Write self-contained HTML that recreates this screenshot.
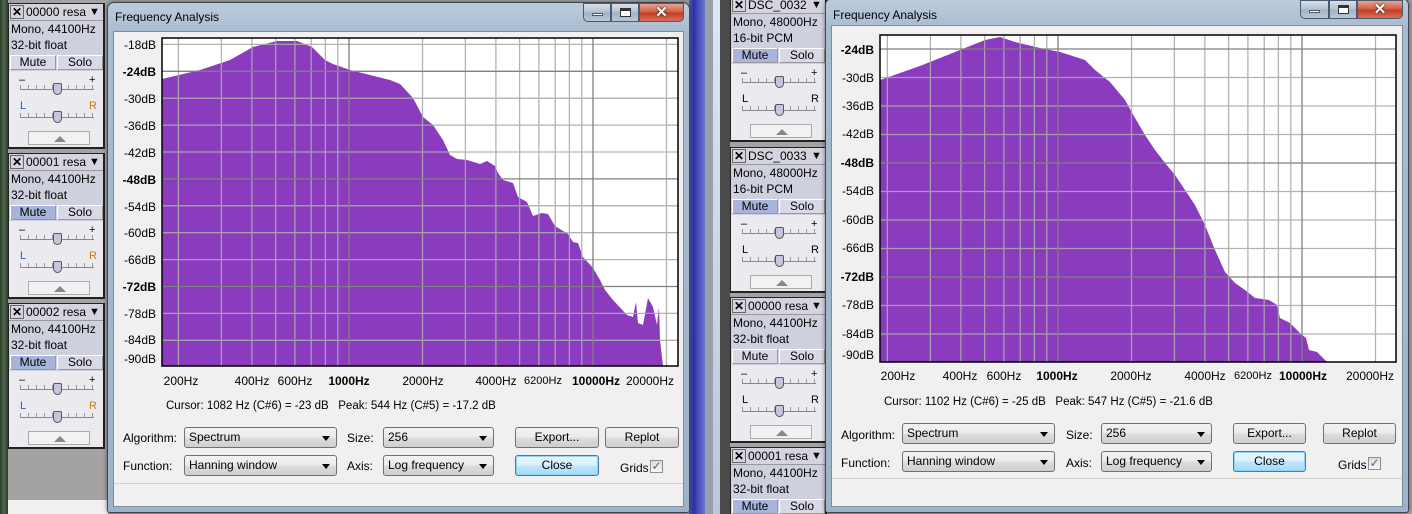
<!DOCTYPE html>
<html style="width:1412px;height:514px;overflow:hidden"><head><meta charset="utf-8"><style>
*{box-sizing:border-box;margin:0;padding:0}
body{width:1412px;height:514px;position:relative;overflow:hidden;background:#a3a3a3;font-family:"Liberation Sans",sans-serif;font-size:12px;color:#000}
.abs{position:absolute}
.trk{position:absolute;width:97px;height:146px;background:#e6e6ec;border:1px solid #222;border-right:2px solid #222;border-bottom:2px solid #222;overflow:hidden}
.hd{position:absolute;left:0;top:0;width:100%;height:17px;background:#d4d4de;border-bottom:1px solid #999}
.hd .x{position:absolute;left:1px;top:1px;width:14px;height:14px;border:1px solid #666;font-size:12px;line-height:13px;text-align:center;font-weight:bold}
.hd .nm{position:absolute;left:17px;top:1px;height:14px;width:66px;font-size:12px;line-height:14px;white-space:nowrap;overflow:hidden}
.hd .dd{position:absolute;left:80px;top:0;font-size:11px;line-height:16px}
.info{position:absolute;left:0;top:17px;width:100%;height:34px;background:#cfd0de;font-size:12px;line-height:16px;padding-left:2px;white-space:nowrap}
.ms{position:absolute;left:0;top:51px;width:100%;height:16px;background:#cfd0de}
.ms span{position:absolute;top:0;height:15px;border:1px solid #fff;border-right-color:#999;border-bottom-color:#999;background:#d8d9e4;font-size:12px;line-height:13px;text-align:center}
.ms .m{left:1px;width:46px}.ms .s{left:48px;width:46px}
.ms .on{background:#a9b4dc}
.sl{position:absolute;left:0;top:67px;width:100%;height:78px;background:#ebebef}
.ln{position:absolute;left:11px;width:74px;height:5px;border-bottom:1px solid #888;background:repeating-linear-gradient(90deg,#999 0 1px,transparent 1px 8px)}
.th{position:absolute;left:44px;width:9px;height:12px;background:#c4c6dc;border:1px solid #555;border-radius:2px 2px 5px 5px}
.lab{position:absolute;font-size:11px}
.up{position:absolute;left:19px;top:60px;width:62px;height:14px;border:1px solid #aaa;background:#f2f2f2}
.up i{position:absolute;left:25px;top:4px;width:0;height:0;border-left:6px solid transparent;border-right:6px solid transparent;border-bottom:6px solid #888}
.dlg{position:absolute;border:1px solid #3c4654;border-radius:7px 7px 3px 3px;background:linear-gradient(180deg,#bcccdc 0,#a9bbcf 30px,#9fb3c8 100%);box-shadow:0 0 4px rgba(0,0,0,.5)}
.ttl{position:absolute;left:7px;top:7px;font-size:12px;color:#000}
.client{position:absolute;background:#f0f0f0;border:1px solid #7d8c9c}
.tb{position:absolute;height:19px;border:1px solid #4a5a6c;background:linear-gradient(#d8e0ea,#b1c0d0 50%,#a0b2c6 51%,#b8c8d8)}
.tb.c{background:linear-gradient(#e9a496,#d0583f 50%,#c13b20 51%,#d7705c);border-radius:0 0 5px 0}
.tb.mn{border-radius:0 0 0 5px}
.sel{position:absolute;height:21px;border:1px solid #707070;border-radius:3px;background:linear-gradient(#f2f2f2,#ebebeb 50%,#dddddd 51%,#cfcfcf);font-size:12px;line-height:19px;padding-left:4px}
.sel:after{content:"";position:absolute;right:6px;top:8px;border-left:4px solid transparent;border-right:4px solid transparent;border-top:5px solid #000}
.btn{position:absolute;height:21px;border:1px solid #707070;border-radius:3px;background:linear-gradient(#f2f2f2,#ebebeb 50%,#dddddd 51%,#cfcfcf);font-size:12px;line-height:19px;text-align:center}
.btn.def{border-color:#3c7fb1;background:linear-gradient(#eaf6fd,#d9f0fc 50%,#bee6fd 51%,#a7d9f5);box-shadow:inset 0 0 0 1px #8fd4f8}
.cb{position:absolute;width:13px;height:13px;border:1px solid #8f8f8f;background:linear-gradient(#dcdcdc,#f8f8f8);font-size:12px;line-height:11px;text-align:center;color:#4a5fa8}
.lbl{position:absolute;font-size:12px}
.stat{position:absolute;height:22px;border-top:1px solid #d6d3ce;background:#f0f0f0}
</style></head><body>

<div class="abs" style="left:0;top:0;width:8px;height:514px;background:linear-gradient(90deg,#2c3a2c,#4e6a4a,#2e3b2d)"></div>
<div class="abs" style="left:8px;top:0;width:100px;height:500px;background:#a3a3a3"></div>
<div class="abs" style="left:8px;top:500px;width:100px;height:14px;background:#f0f0f0"></div>

<div class="trk" style="left:8px;top:3px">
 <div class="hd"><span class="x">✕</span><span class="nm">00000 resa</span><span class="dd">▼</span></div>
 <div class="info">Mono, 44100Hz<br>32-bit float</div>
 <div class="ms"><span class="m">Mute</span><span class="s">Solo</span></div>
 <div class="sl"><span class="lab" style="left:10px;top:3px">–</span><span class="lab" style="left:80px;top:3px">+</span><div class="ln" style="top:14px"></div><div class="th" style="top:12px"></div>
 <span class="lab" style="left:11px;top:29px;color:#2a5fc0">L</span><span class="lab" style="left:80px;top:29px;color:#c08010">R</span><div class="ln" style="top:42px"></div><div class="th" style="top:40px"></div><div class="up"><i></i></div></div>
</div>
<div class="trk" style="left:8px;top:153px">
 <div class="hd"><span class="x">✕</span><span class="nm">00001 resa</span><span class="dd">▼</span></div>
 <div class="info">Mono, 44100Hz<br>32-bit float</div>
 <div class="ms"><span class="m on">Mute</span><span class="s">Solo</span></div>
 <div class="sl"><span class="lab" style="left:10px;top:3px">–</span><span class="lab" style="left:80px;top:3px">+</span><div class="ln" style="top:14px"></div><div class="th" style="top:12px"></div>
 <span class="lab" style="left:11px;top:29px;color:#2a5fc0">L</span><span class="lab" style="left:80px;top:29px;color:#c08010">R</span><div class="ln" style="top:42px"></div><div class="th" style="top:40px"></div><div class="up"><i></i></div></div>
</div>
<div class="trk" style="left:8px;top:303px">
 <div class="hd"><span class="x">✕</span><span class="nm">00002 resa</span><span class="dd">▼</span></div>
 <div class="info">Mono, 44100Hz<br>32-bit float</div>
 <div class="ms"><span class="m on">Mute</span><span class="s">Solo</span></div>
 <div class="sl"><span class="lab" style="left:10px;top:3px">–</span><span class="lab" style="left:80px;top:3px">+</span><div class="ln" style="top:14px"></div><div class="th" style="top:12px"></div>
 <span class="lab" style="left:11px;top:29px;color:#2a5fc0">L</span><span class="lab" style="left:80px;top:29px;color:#c08010">R</span><div class="ln" style="top:42px"></div><div class="th" style="top:40px"></div><div class="up"><i></i></div></div>
</div>

<div class="abs" style="left:689px;top:0;width:16px;height:514px;background:linear-gradient(90deg,#5a6ab0,#2d2fa8 30%,#4a50c0 60%,#6878c8)"></div>
<div class="abs" style="left:705px;top:0;width:8px;height:514px;background:#9aa0aa"></div>
<div class="abs" style="left:713px;top:0;width:7px;height:514px;background:linear-gradient(#dde6f2,#b8c8da)"></div>
<div class="abs" style="left:720px;top:0;width:10px;height:514px;background:#4a4a4a"></div>
<div class="abs" style="left:730px;top:0;width:96px;height:514px;background:#a3a3a3"></div>

<div class="trk" style="left:730px;top:-4px">
 <div class="hd"><span class="x">✕</span><span class="nm">DSC_0032</span><span class="dd">▼</span></div>
 <div class="info">Mono, 48000Hz<br>16-bit PCM</div>
 <div class="ms"><span class="m on">Mute</span><span class="s">Solo</span></div>
 <div class="sl"><span class="lab" style="left:10px;top:3px">–</span><span class="lab" style="left:80px;top:3px">+</span><div class="ln" style="top:14px"></div><div class="th" style="top:12px"></div>
 <span class="lab" style="left:11px;top:29px">L</span><span class="lab" style="left:80px;top:29px">R</span><div class="ln" style="top:42px"></div><div class="th" style="top:40px"></div><div class="up"><i></i></div></div>
</div>
<div class="trk" style="left:730px;top:147px">
 <div class="hd"><span class="x">✕</span><span class="nm">DSC_0033</span><span class="dd">▼</span></div>
 <div class="info">Mono, 48000Hz<br>16-bit PCM</div>
 <div class="ms"><span class="m on">Mute</span><span class="s">Solo</span></div>
 <div class="sl"><span class="lab" style="left:10px;top:3px">–</span><span class="lab" style="left:80px;top:3px">+</span><div class="ln" style="top:14px"></div><div class="th" style="top:12px"></div>
 <span class="lab" style="left:11px;top:29px">L</span><span class="lab" style="left:80px;top:29px">R</span><div class="ln" style="top:42px"></div><div class="th" style="top:40px"></div><div class="up"><i></i></div></div>
</div>
<div class="trk" style="left:730px;top:297px">
 <div class="hd"><span class="x">✕</span><span class="nm">00000 resa</span><span class="dd">▼</span></div>
 <div class="info">Mono, 44100Hz<br>32-bit float</div>
 <div class="ms"><span class="m">Mute</span><span class="s">Solo</span></div>
 <div class="sl"><span class="lab" style="left:10px;top:3px">–</span><span class="lab" style="left:80px;top:3px">+</span><div class="ln" style="top:14px"></div><div class="th" style="top:12px"></div>
 <span class="lab" style="left:11px;top:29px">L</span><span class="lab" style="left:80px;top:29px">R</span><div class="ln" style="top:42px"></div><div class="th" style="top:40px"></div><div class="up"><i></i></div></div>
</div>
<div class="trk" style="left:730px;top:447px;height:80px">
 <div class="hd"><span class="x">✕</span><span class="nm">00001 resa</span><span class="dd">▼</span></div>
 <div class="info">Mono, 44100Hz<br>32-bit float</div>
 <div class="ms"><span class="m on">Mute</span><span class="s">Solo</span></div>
</div>

<div class="dlg" style="left:107px;top:2px;width:583px;height:511px">
 <div class="ttl">Frequency Analysis</div>
 <div class="tb mn" style="left:475px;top:0;width:28px"><div class="abs" style="left:8px;top:9px;width:11px;height:3px;background:#fff;border:1px solid #556"></div></div>
 <div class="tb" style="left:503px;top:0;width:28px"><div class="abs" style="left:8px;top:4px;width:11px;height:9px;border:1px solid #333;border-top-width:3px;background:#fff"></div></div>
 <div class="tb c" style="left:531px;top:0;width:45px;color:#fff;font-weight:bold;font-size:15px;text-align:center;line-height:17px;text-shadow:0 0 2px #000">✕</div>
 <div class="client" style="left:5px;top:28px;width:571px;height:476px"></div>
 <div class="stat" style="left:6px;top:480px;width:569px"></div>
</div>

<div class="dlg" style="left:825px;top:-2px;width:584px;height:515px">
 <div class="ttl" style="top:9px">Frequency Analysis</div>
 <div class="tb mn" style="left:474px;top:1px;width:29px"><div class="abs" style="left:8px;top:9px;width:11px;height:3px;background:#fff;border:1px solid #556"></div></div>
 <div class="tb" style="left:503px;top:1px;width:28px"><div class="abs" style="left:8px;top:4px;width:11px;height:9px;border:1px solid #333;border-top-width:3px;background:#fff"></div></div>
 <div class="tb c" style="left:531px;top:1px;width:46px;color:#fff;font-weight:bold;font-size:15px;text-align:center;line-height:17px;text-shadow:0 0 2px #000">✕</div>
 <div class="client" style="left:5px;top:26px;width:572px;height:482px"></div>
 <div class="stat" style="left:6px;top:479px;width:570px"></div>
</div>

<svg class="abs" style="left:0;top:0" width="1412" height="514" font-family="Liberation Sans, sans-serif" font-size="12">
 <rect x="162" y="38" width="516" height="328" fill="#fff"/>
 <polygon fill="#8a3bbe" points="162,366 162,79 200,70 230,60 253,47 277,41 297,41 312,47 325,60 333,64 350,70 370,75 390,80 400,84 413,98 423,117 433,125 443,140 450,155 457,159 467,160 480,164 487,161 495,166 498,173 503,180 513,183 518,197 527,202 533,216 542,213 548,214 555,226 568,234 573,242 578,243 583,257 593,268 600,280 605,290 613,300 627,315 633,317 636,302 638,323 643,325 648,298 653,307 657,325 659,307 660,340 663,366"/>
 <g stroke="#aaa" stroke-width="1.3" opacity=".9">
  <path d="M178.4 38V366M221.4 38V366M251.9 38V366M275.6 38V366M294.9 38V366M311.2 38V366M325.4 38V366M337.8 38V366M422.5 38V366M465.4 38V366M495.9 38V366M519.6 38V366M538.9 38V366M555.2 38V366M569.4 38V366M581.8 38V366M666.5 38V366"/>
  <path d="M162 44.4H678M162 98.2H678M162 125.1H678M162 152H678M162 205.8H678M162 232.7H678M162 259.6H678M162 313.4H678M162 340.3H678"/>
 </g>
 <g stroke="#808080" stroke-width="1.3">
  <path d="M349 38V366M593 38V366M162 71.3H678M162 178.9H678M162 286.5H678"/>
 </g>
 <rect x="162" y="38" width="516" height="328" fill="none" stroke="#000" stroke-width="1.5"/>
 <g text-anchor="end">
  <text x="156" y="49">-18dB</text><text x="156" y="76" font-weight="bold">-24dB</text><text x="156" y="103">-30dB</text><text x="156" y="130">-36dB</text><text x="156" y="157">-42dB</text><text x="156" y="184" font-weight="bold">-48dB</text><text x="156" y="211">-54dB</text><text x="156" y="237">-60dB</text><text x="156" y="264">-66dB</text><text x="156" y="291" font-weight="bold">-72dB</text><text x="156" y="318">-78dB</text><text x="156" y="344">-84dB</text><text x="156" y="363">-90dB</text>
 </g>
 <g text-anchor="middle">
  <text x="181" y="385">200Hz</text><text x="252" y="385">400Hz</text><text x="295" y="385">600Hz</text><text x="349" y="385" font-weight="bold">1000Hz</text><text x="423" y="385">2000Hz</text><text x="496" y="385">4000Hz</text><text x="543" y="384" font-size="11">6200Hz</text><text x="596" y="385" font-weight="bold">10000Hz</text><text x="650" y="385">20000Hz</text>
 </g>
 <text x="166" y="409" font-size="11.5">Cursor: 1082 Hz (C#6) = -23 dB &#160;&#160;Peak: 544 Hz (C#5) = -17.2 dB</text>

 <rect x="880" y="35" width="516" height="327" fill="#fff"/>
 <polygon fill="#8a3bbe" points="880,362 880,80 920,66 960,50 985,40 1000,37 1015,42 1040,48 1060,52 1085,60 1095,70 1110,82 1125,100 1135,118 1145,135 1155,150 1165,163 1175,175 1185,190 1195,205 1205,225 1215,250 1225,272 1235,283 1245,290 1255,298 1269,300 1277,305 1280,318 1290,323 1301,334 1306,338 1309,350 1317,352 1327,362"/>
 <g stroke="#aaa" stroke-width="1.3" opacity=".9">
  <path d="M887.4 35V362M930.4 35V362M960.9 35V362M984.6 35V362M1003.9 35V362M1020.2 35V362M1034.4 35V362M1046.8 35V362M1131.5 35V362M1174.4 35V362M1204.9 35V362M1228.6 35V362M1247.9 35V362M1264.2 35V362M1278.4 35V362M1290.8 35V362M1375.5 35V362"/>
  <path d="M880 77.5H1396M880 106H1396M880 134.5H1396M880 191.5H1396M880 220H1396M880 248.5H1396M880 305.5H1396M880 334H1396"/>
 </g>
 <g stroke="#808080" stroke-width="1.3">
  <path d="M1058 35V362M1302 35V362M880 49H1396M880 163H1396M880 277H1396"/>
 </g>
 <rect x="880" y="35" width="516" height="327" fill="none" stroke="#000" stroke-width="1.5"/>
 <g text-anchor="end">
  <text x="874" y="54" font-weight="bold">-24dB</text><text x="874" y="82">-30dB</text><text x="874" y="110">-36dB</text><text x="874" y="138">-42dB</text><text x="874" y="167" font-weight="bold">-48dB</text><text x="874" y="195">-54dB</text><text x="874" y="224">-60dB</text><text x="874" y="252">-66dB</text><text x="874" y="281" font-weight="bold">-72dB</text><text x="874" y="309">-78dB</text><text x="874" y="338">-84dB</text><text x="874" y="359">-90dB</text>
 </g>
 <g text-anchor="middle">
  <text x="898" y="380">200Hz</text><text x="960" y="380">400Hz</text><text x="1004" y="380">600Hz</text><text x="1057" y="380" font-weight="bold">1000Hz</text><text x="1131" y="380">2000Hz</text><text x="1205" y="380">4000Hz</text><text x="1253" y="379" font-size="11">6200Hz</text><text x="1303" y="380" font-weight="bold">10000Hz</text><text x="1370" y="380">20000Hz</text>
 </g>
 <text x="884" y="405" font-size="11.5">Cursor: 1102 Hz (C#6) = -25 dB &#160;&#160;Peak: 547 Hz (C#5) = -21.6 dB</text>
</svg>

<span class="lbl" style="left:123px;top:431px">Algorithm:</span>
<div class="sel" style="left:184px;top:427px;width:153px">Spectrum</div>
<span class="lbl" style="left:347px;top:431px">Size:</span>
<div class="sel" style="left:383px;top:427px;width:111px">256</div>
<div class="btn" style="left:515px;top:427px;width:84px">Export...</div>
<div class="btn" style="left:605px;top:427px;width:74px">Replot</div>
<span class="lbl" style="left:123px;top:459px">Function:</span>
<div class="sel" style="left:184px;top:455px;width:153px">Hanning window</div>
<span class="lbl" style="left:347px;top:459px">Axis:</span>
<div class="sel" style="left:383px;top:455px;width:111px">Log frequency</div>
<div class="btn def" style="left:515px;top:455px;width:84px">Close</div>
<span class="lbl" style="left:620px;top:461px">Grids</span>
<div class="cb" style="left:650px;top:460px">✓</div>

<span class="lbl" style="left:841px;top:428px">Algorithm:</span>
<div class="sel" style="left:902px;top:423px;width:153px">Spectrum</div>
<span class="lbl" style="left:1066px;top:428px">Size:</span>
<div class="sel" style="left:1101px;top:423px;width:111px">256</div>
<div class="btn" style="left:1233px;top:423px;width:73px">Export...</div>
<div class="btn" style="left:1323px;top:423px;width:73px">Replot</div>
<span class="lbl" style="left:841px;top:456px">Function:</span>
<div class="sel" style="left:902px;top:451px;width:153px">Hanning window</div>
<span class="lbl" style="left:1066px;top:456px">Axis:</span>
<div class="sel" style="left:1101px;top:451px;width:111px">Log frequency</div>
<div class="btn def" style="left:1233px;top:451px;width:73px">Close</div>
<span class="lbl" style="left:1338px;top:458px">Grids</span>
<div class="cb" style="left:1368px;top:457px">✓</div>
</body></html>
